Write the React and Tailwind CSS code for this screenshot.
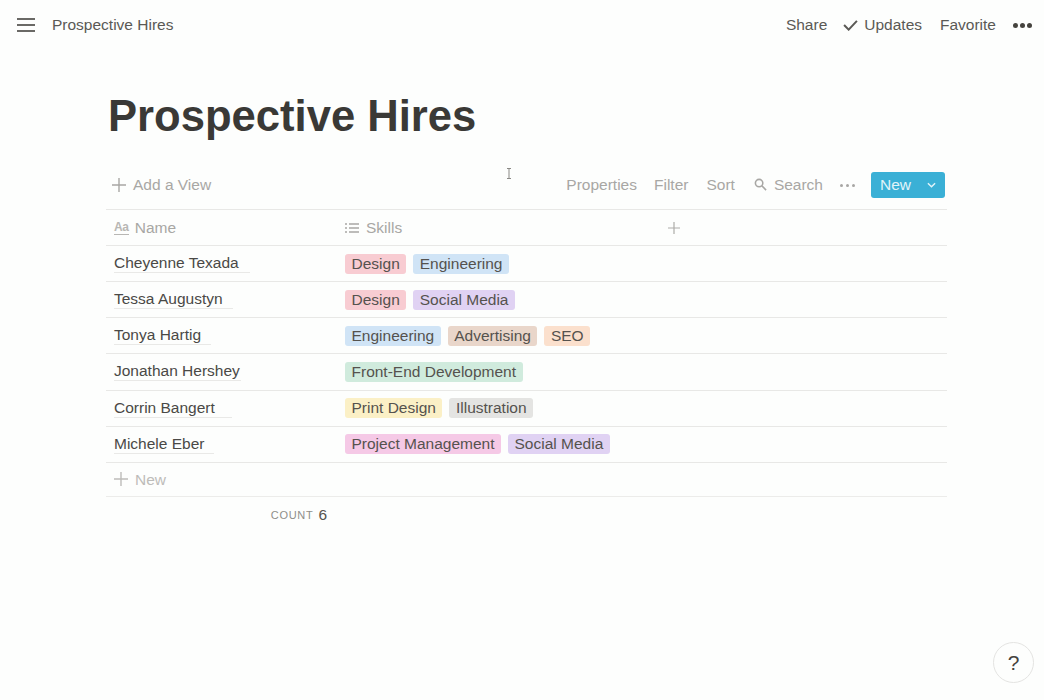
const F = { fontFamily: '"Liberation Sans", Arial, sans-serif' };

const TAG = {
  Design: 'bg-[#f8ccd2]',
  Engineering: 'bg-[#d0e4f6]',
  'Social Media': 'bg-[#e0d2f3]',
  Advertising: 'bg-[#e9d6ca]',
  SEO: 'bg-[#fbe0cd]',
  'Front-End Development': 'bg-[#d0ebdd]',
  'Print Design': 'bg-[#fbf0c6]',
  Illustration: 'bg-[#e4e4e2]',
  'Project Management': 'bg-[#f5c9e6]',
};

const ROWS = [
  ['Cheyenne Texada', ['Design', 'Engineering'], 'w-[136px]'],
  ['Tessa Augustyn', ['Design', 'Social Media'], 'w-[119px]'],
  ['Tonya Hartig', ['Engineering', 'Advertising', 'SEO'], 'w-[97px]'],
  ['Jonathan Hershey', ['Front-End Development'], 'w-[127px]'],
  ['Corrin Bangert', ['Print Design', 'Illustration'], 'w-[118px]'],
  ['Michele Eber', ['Project Management', 'Social Media'], 'w-[100px]'],
];

function Plus({ className }) {
  return (
    <svg viewBox="0 0 14 14" className={className} fill="none" stroke="currentColor" strokeWidth="1.4">
      <path d="M7 0v14M0 7h14" />
    </svg>
  );
}

export default function App() {
  return (
    <div style={F} className="w-[1044px] h-[700px] bg-[#fdfefd] relative overflow-hidden text-[#37352f]">
      <header className="h-[50px] flex items-center pl-[17px] pr-[12px] text-[15.5px] text-[#5a5955]">
        <svg viewBox="0 0 18 14" className="w-[18px] h-[14px] mr-[17px]" fill="none" stroke="#6a6966" strokeWidth="2">
          <path d="M0 1h18M0 7h18M0 13h18" />
        </svg>
        <span>Prospective Hires</span>
        <div className="ml-auto flex items-center">
          <span>Share</span>
          <svg viewBox="0 0 16 12" className="w-[15px] h-[11px] ml-[16px] mr-[6px]" fill="none" stroke="#5a5955" strokeWidth="2.2">
            <path d="M1 5.5l5 5 9-9.5" />
          </svg>
          <span>Updates</span>
          <span className="ml-[18px]">Favorite</span>
          <span className="ml-[17px] flex gap-[2px]">
            <i className="w-[5px] h-[5px] rounded-full bg-[#45433e]" />
            <i className="w-[5px] h-[5px] rounded-full bg-[#45433e]" />
            <i className="w-[5px] h-[5px] rounded-full bg-[#45433e]" />
          </span>
        </div>
      </header>

      <main className="ml-[106px] w-[841px]">
        <h1 className="pl-[2px] mt-[40px] h-[52px] text-[43.6px] leading-[52px] font-bold text-[#3a3936]">Prospective Hires</h1>

        <div className="mt-[25px] h-[43px] pb-[6px] flex items-center pl-[6px] pr-[2px] text-[15.5px] text-[#a8a7a4] border-b border-[#e8e8e6]">
          <Plus className="w-[14px] h-[14px] mr-[7px]" />
          <span>Add a View</span>
          <div className="ml-auto flex items-center">
            <span>Properties</span>
            <span className="ml-[17px]">Filter</span>
            <span className="ml-[18px]">Sort</span>
            <svg viewBox="0 0 14 14" className="w-[13px] h-[13px] ml-[19px] mr-[7px] -mt-[1px]" fill="none" stroke="#a8a7a4" strokeWidth="1.7">
              <circle cx="5.5" cy="5.5" r="4" />
              <path d="M8.5 8.5l4.5 4.5" />
            </svg>
            <span>Search</span>
            <span className="ml-[17px] flex gap-[3px]">
              <i className="w-[3px] h-[3px] rounded-full bg-[#a8a7a4]" />
              <i className="w-[3px] h-[3px] rounded-full bg-[#a8a7a4]" />
              <i className="w-[3px] h-[3px] rounded-full bg-[#a8a7a4]" />
            </span>
            <div className="ml-[16px] w-[74px] h-[26px] rounded-[3px] bg-[#3ab0d6] text-[#e2f4f9] flex items-center">
              <span className="ml-[9px]">New</span>
              <svg viewBox="0 0 10 6" className="w-[9px] h-[6px] ml-auto mr-[9px]" fill="none" stroke="#e2f4f9" strokeWidth="1.6">
                <path d="M1 1l4 4 4-4" />
              </svg>
            </div>
          </div>
        </div>

        <div className="h-[36px] pt-[1px] flex items-center text-[15.5px] text-[#a8a7a4] border-b border-[#e8e8e6]">
          <div className="w-[239px] pl-[8px] flex items-center">
            <span className="text-[12px] leading-[13px] font-bold text-[#b8b7b4] border-b border-[#b8b7b4] mr-[6px] tracking-[-0.3px]">Aa</span>
            <span>Name</span>
          </div>
          <svg viewBox="0 0 14 12" className="w-[14px] h-[12px] mr-[7px]" fill="none" stroke="#a8a7a4" strokeWidth="1.4">
            <path d="M0 2h2M4 2h10M0 6h2M4 6h10M0 10h2M4 10h10" />
          </svg>
          <span>Skills</span>
          <Plus className="w-[12px] h-[12px] ml-[266px] text-[#adaca9]" />
        </div>

        {ROWS.map(([name, tags, w]) => (
          <div key={name} className="h-[36.17px] flex border-b border-[#e8e8e6] text-[15.5px]">
            <div className="w-[239px] pl-[8px] pt-[8px]">
              <div className={`${w} h-[19px] leading-[18px] text-[#4a4946] border-b border-[#e9e9e7]`}>{name}</div>
            </div>
            <div className="flex items-center gap-[7px]">
              {tags.map((t) => (
                <span key={t} className={`${TAG[t]} h-[20px] leading-[20px] px-[6.5px] rounded-[3px] text-[#55524e]`}>{t}</span>
              ))}
            </div>
          </div>
        ))}

        <div className="h-[34px] flex items-center pl-[8px] text-[15.5px] text-[#bdbcb9] border-b border-[#ececea]">
          <Plus className="w-[14px] h-[14px] mr-[7px]" />
          <span>New</span>
        </div>

        <div className="h-[36px] flex items-center justify-end w-[221px] text-[#6d6b67]">
          <span className="text-[11px] tracking-[0.7px] text-[#8f8e8a]">COUNT</span>
          <span className="text-[15.5px] ml-[5px] text-[#55534e]">6</span>
        </div>
      </main>

      <div className="absolute left-[993px] top-[642px] w-[41px] h-[41px] rounded-full bg-[#fdfefd] border border-[#e4e4e2] flex items-center justify-center text-[21px] text-[#45433e]">?</div>
      <svg viewBox="0 0 6 11" className="absolute left-[506px] top-[168px] w-[6px] h-[11px]" fill="none" stroke="#8a8985" strokeWidth="1">
        <path d="M1 .5h4M3 .5v10M1 10.5h4" />
      </svg>
    </div>
  );
}
